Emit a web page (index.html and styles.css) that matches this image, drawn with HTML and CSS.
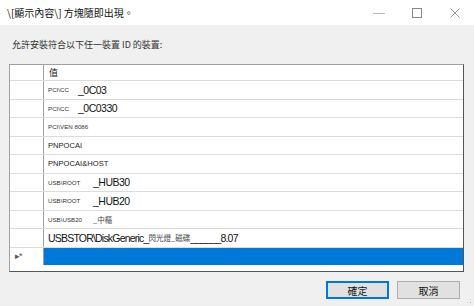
FILE: index.html
```html
<!DOCTYPE html>
<html lang="zh-Hant">
<head>
	<meta charset="UTF-8">
	<title>裝置 ID</title>
	<link rel="stylesheet" href="styles.css">
</head>
<body>
	<!--標題列-->
	<div class="titlebar">
		<span class="title">\[顯示內容\] 方塊隨即出現。</span>
		<div class="controls">
			<span class="ctl"><svg width="12" height="10" viewBox="0 0 12 10"><path d="M0 5.5h12" stroke="#bbb" stroke-width="1"/></svg></span>
			<span class="ctl"><svg width="12" height="10" viewBox="0 0 12 10"><rect x="1.5" y="0.5" width="9" height="9" fill="none" stroke="#888" stroke-width="1"/></svg></span>
			<span class="ctl"><svg width="12" height="10" viewBox="0 0 12 10"><path d="M1.5 0.5l9 9M10.5 0.5l-9 9" stroke="#999" stroke-width="1"/></svg></span>
		</div>
	</div>
	<!--內容-->
	<div class="content">
		<div class="label">允許安裝符合以下任一裝置 ID 的裝置:</div>
		<div class="grid">
			<div class="row head"><div class="rh"></div><div class="cell cjk">值</div></div>
			<div class="row"><div class="rh"></div><div class="cell"><span class="sm w30">PCI\CC</span><span class="big">_0C03</span></div></div>
			<div class="row"><div class="rh"></div><div class="cell"><span class="sm w30">PCI\CC</span><span class="big">_0C0330</span></div></div>
			<div class="row"><div class="rh"></div><div class="cell"><span class="sm">PCI\VEN 8086</span></div></div>
			<div class="row"><div class="rh"></div><div class="cell"><span class="md">PNPOCAI</span></div></div>
			<div class="row"><div class="rh"></div><div class="cell"><span class="md">PNPOCAI&amp;HOST</span></div></div>
			<div class="row"><div class="rh"></div><div class="cell"><span class="sm w45">USB\ROOT</span><span class="big">_HUB30</span></div></div>
			<div class="row"><div class="rh"></div><div class="cell"><span class="sm w45">USB\ROOT</span><span class="big">_HUB20</span></div></div>
			<div class="row"><div class="rh"></div><div class="cell"><span class="sm w45">USB\USB20</span><span class="cn">_中樞</span></div></div>
			<div class="row"><div class="rh"></div><div class="cell"><span class="big tight">USBSTOR\DiskGeneric_</span><span class="cn">閃光燈_磁碟</span><span class="big tight">______8.07</span></div></div>
			<div class="row sel"><div class="rh"><span class="mark">▸*</span></div><div class="cell"></div></div>
		</div>
		<div class="buttons">
			<button class="btn primary">確定</button>
			<button class="btn">取消</button>
		</div>
	</div>
	<div class="grip"></div>
</body>
</html>
```

FILE: styles.css
```css
*{
	margin:0;
	padding:0;
	box-sizing:border-box;
}
body{
	width:474px;
	height:306px;
	background:#f0f0f0;
	font-family:"Liberation Sans","Noto Sans CJK TC",sans-serif;
	color:#111;
	position:relative;
	overflow:hidden;
}
.titlebar{
	height:25px;
	background:#fff;
	display:flex;
	align-items:center;
	padding-left:7px;
}
.title{
	font-family:"Noto Sans CJK TC",sans-serif;
	font-size:10px;
	color:#111;
}
.controls{
	margin-left:auto;
	display:flex;
}
.ctl{
	width:38px;
	height:25px;
	display:flex;
	align-items:center;
	justify-content:center;
}
.content{
	padding:13px 11px 0 9px;
}
.label{
	font-family:"Noto Sans CJK TC",sans-serif;
	font-size:9px;
	line-height:14px;
	color:#333;
	padding-left:3px;
	margin-bottom:12px;
}
.grid{
	width:455px;
	height:208px;
	background:#fff;
	border:1px solid #a0a0a0;
	border-right-color:#555;
	border-bottom-color:#555;
}
.row{
	display:flex;
	height:18.5px;
	border-bottom:1px solid #dcdcdc;
}
.row.head{
	height:16px;
}
.rh{
	width:34px;
	border-right:1px solid #a0a0a0;
	display:flex;
	align-items:center;
	padding-left:5px;
}
.cell{
	flex:1;
	display:flex;
	align-items:center;
	padding-left:4px;
	white-space:nowrap;
}
.cjk{
	font-family:"Noto Sans CJK TC",sans-serif;
	font-size:9px;
	padding-left:5px;
}
.sm{
	font-size:6.2px;
	color:#333;
}
.w30{
	width:30px;
}
.w45{
	width:45px;
}
.md{
	font-size:7.6px;
	color:#222;
}
.big{
	font-size:10.5px;
	letter-spacing:-0.5px;
}
.big.tight{
	letter-spacing:-0.8px;
}
.cn{
	font-family:"Noto Sans CJK TC",sans-serif;
	font-size:7.5px;
	color:#444;
}
.row.sel{
	height:17px;
	border-bottom:none;
}
.row.sel .cell{
	background:#0078d7;
}
.mark{
	font-size:9px;
	color:#555;
	letter-spacing:-1px;
}
.buttons{
	display:flex;
	justify-content:flex-end;
	gap:8px;
	margin-top:9px;
	padding-right:3px;
}
.btn{
	width:63px;
	height:18px;
	font-family:"Noto Sans CJK TC",sans-serif;
	font-size:10px;
	color:#111;
	background:#e1e1e1;
	border:1px solid #adadad;
}
.btn.primary{
	border:2px solid #0078d7;
}
.grip{
	position:absolute;
	right:2px;
	bottom:2px;
	width:6px;
	height:6px;
	background:radial-gradient(circle,#b0b0b0 0.8px,transparent 1px) 0 0/3px 3px;
	clip-path:polygon(100% 0,100% 100%,0 100%);
}
```
